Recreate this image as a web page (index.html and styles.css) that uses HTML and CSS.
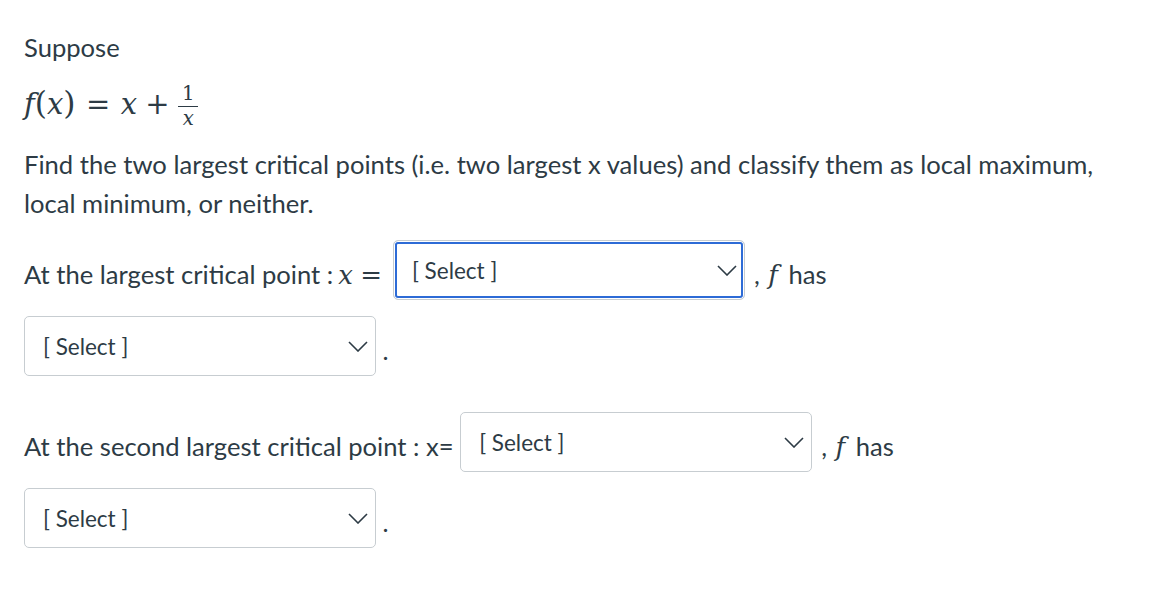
FILE: index.html
```html
<!DOCTYPE html>
<html lang="en">
<head>
<meta charset="utf-8">
<title>Critical points</title>
<link rel="stylesheet" href="styles.css">
</head>
<body>
<div class="question">
  <p class="intro">Suppose</p>
  <p class="formula"><span class="math"><i>f</i><span class="op">(</span><i>x</i><span class="op">)</span><span class="rel">=</span><i>x</i><span class="bin">+</span><span class="frac"><span class="num">1</span><span class="den"><i>x</i></span></span></span></p>
  <p class="text">Find the two largest critical points (i.e. two largest x values) and classify them as local maximum, local minimum, or neither.</p>
  <p class="row">At the largest critical point :<span class="math lead"><i>x</i><span class="rel">=</span></span><span class="select focused"><span class="label">[ Select ]</span><svg class="chev" viewBox="0 0 20 11" width="20" height="11"><path d="M1 1 L10 10 L19 1" fill="none" stroke="#2d3b45" stroke-width="1.6"/></svg></span><span class="after">, <span class="math fn"><i>f</i></span> has</span> <span class="select"><span class="label">[ Select ]</span><svg class="chev" viewBox="0 0 20 11" width="20" height="11"><path d="M1 1 L10 10 L19 1" fill="none" stroke="#2d3b45" stroke-width="1.6"/></svg></span> .</p>
  <p class="row second">At the second largest critical point : x= <span class="select"><span class="label">[ Select ]</span><svg class="chev" viewBox="0 0 20 11" width="20" height="11"><path d="M1 1 L10 10 L19 1" fill="none" stroke="#2d3b45" stroke-width="1.6"/></svg></span><span class="after">, <span class="math fn"><i>f</i></span> has</span> <span class="select"><span class="label">[ Select ]</span><svg class="chev" viewBox="0 0 20 11" width="20" height="11"><path d="M1 1 L10 10 L19 1" fill="none" stroke="#2d3b45" stroke-width="1.6"/></svg></span> .</p>
</div>
</body>
</html>
```
FILE: styles.css
```css
html, body {
  margin: 0;
  padding: 0;
  background: #ffffff;
}
body {
  font-family: Lato, "Noto Sans", sans-serif;
  font-size: 25.6px;
  line-height: 39px;
  color: #2d3b45;
}
.question {
  padding: 28px 24px;
}
p {
  margin: 0;
}
.formula {
  margin-top: 16px;
  height: 40px;
  line-height: 40px;
}
.text {
  margin-top: 22px;
}
.row {
  margin-top: 17px;
}
.row.second {
  margin-top: 20px;
}
.math {
  font-family: "DejaVu Serif", "Liberation Serif", serif;
  font-size: 26px;
  white-space: nowrap;
}
.formula .math {
  font-size: 29px;
}
.math i {
  font-style: italic;
}
.lead {
  margin-left: 5px;
}
.op {
  font-size: 1.08em;
}
.rel {
  margin: 0 0.3em;
}
.formula .rel {
  margin: 0 0.36em;
}
.row .rel {
  margin: 0 11px 0 0.28em;
}
.bin {
  margin: 0 0.22em;
}
.formula .bin {
  margin: 0 0.26em 0 0.28em;
}
.frac {
  display: inline-flex;
  flex-direction: column;
  align-items: center;
  vertical-align: middle;
  font-size: 0.68em;
  line-height: 1;
  margin-left: 0.05em;
}
.num {
  padding: 0 0.2em 2px;
  border-bottom: 1px solid #2d3b45;
}
.den {
  padding-top: 2px;
}
.after {
  margin-left: 9px;
}
.fn {
  margin: 0 4px 0 2px;
}
.select {
  display: inline-flex;
  align-items: center;
  justify-content: space-between;
  box-sizing: border-box;
  width: 352px;
  height: 60px;
  padding: 0 7px 0 18px;
  border: 1px solid #c7cdd1;
  border-radius: 5px;
  background: #ffffff;
  font-family: Lato, "Noto Sans", sans-serif;
  font-size: 22.5px;
  vertical-align: middle;
  margin: 0 0 16px;
}
.select.focused {
  box-shadow: inset 0 0 0 1px #ffffff, inset 0 0 0 3px #2d6bd6;
}
.chev {
  display: block;
}
```
